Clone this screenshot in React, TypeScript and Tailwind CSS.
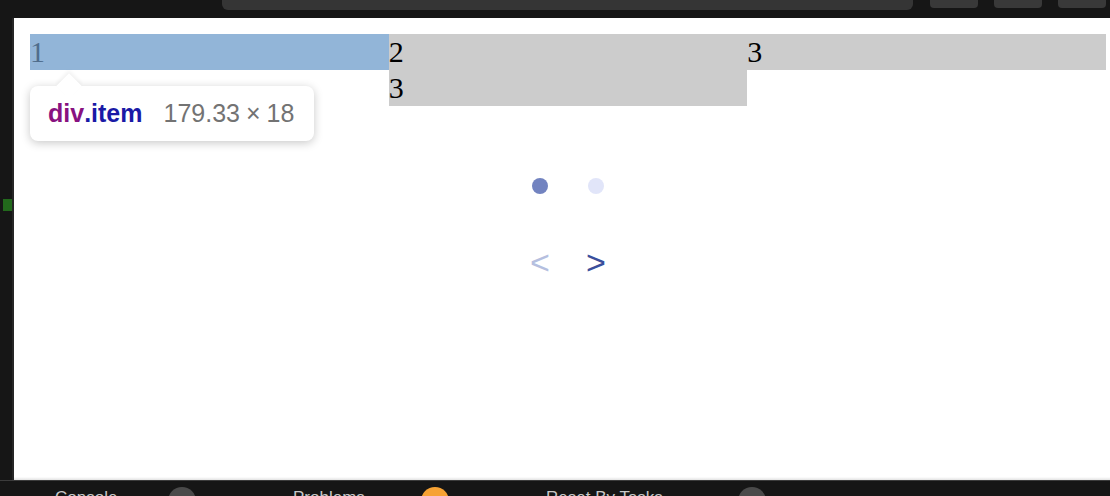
import React from "react";

const serif = { fontFamily: '"Liberation Serif", "Times New Roman", serif' };
const sans = { fontFamily: '"Liberation Sans", Arial, sans-serif' };

function TopBar() {
  return (
    <div className="flex h-[18px] shrink-0 items-start bg-[#161616]">
      <div className="ml-[222px] h-[10px] w-[691px] rounded-b-[6px] bg-[#353535]" />
      <div className="ml-[17px] h-[8px] w-[48px] rounded-b-[4px] bg-[#393939]" />
      <div className="ml-[16px] h-[8px] w-[48px] rounded-b-[4px] bg-[#393939]" />
      <div className="ml-[16px] h-[8px] w-[48px] rounded-b-[4px] bg-[#393939]" />
    </div>
  );
}

function Tooltip() {
  return (
    <div
      className="absolute left-[16px] top-[68px] flex h-[55px] w-[284px] items-center rounded-[8px] bg-white pl-[18px] shadow-[0_2px_10px_rgba(0,0,0,0.22)]"
      style={sans}
    >
      <div className="absolute left-[30px] top-[-9px] h-[18px] w-[18px] rotate-45 bg-white shadow-[-2px_-2px_4px_rgba(0,0,0,0.06)]" />
      <div className="relative flex items-center bg-white">
        <span className="text-[25px] font-bold text-[#881280]">div</span>
        <span className="text-[25px] font-bold text-[#1a1aa6]">.item</span>
        <span className="ml-[21px] text-[25px] text-[#737373]">
          179.33<span className="mx-[6px]">×</span>18
        </span>
      </div>
    </div>
  );
}

function Carousel() {
  const items = [
    { id: 1, text: "1", active: true },
    { id: 2, text: "2" },
    { id: 3, text: "3" },
  ];

  return (
    <div className="relative flex-1 bg-white pl-[16px] pt-[16px]">
      <div className="grid w-[1076px] grid-cols-3 text-[30px] leading-[36px]" style={serif}>
        {items.map((item) =>
          item.active ? (
            <div key={item.id} className="bg-[#92b5d8] text-[#4f6d8c]">
              {item.text}
            </div>
          ) : (
            <div key={item.id} className="bg-[#cccccc] text-black">
              {item.text}
            </div>
          )
        )}
        <div className="col-start-2 bg-[#cccccc] text-black">3</div>
      </div>

      {/* pagination */}
      <div className="mt-[72px] flex w-[1076px] justify-center gap-[40px]">
        <span className="h-[16px] w-[16px] rounded-full bg-[#7283c0]" />
        <span className="h-[16px] w-[16px] rounded-full bg-[#e1e5f9]" />
      </div>

      {/* arrows */}
      <div
        className="mt-[50px] flex w-[1076px] justify-center gap-[40px] text-[34px] leading-[36px]"
        style={sans}
      >
        <button className="flex w-[16px] justify-center text-[#b5bfdf]">&lt;</button>
        <button className="flex w-[16px] justify-center text-[#3b4f9c]">&gt;</button>
      </div>

      <Tooltip />
      <div className="absolute bottom-0 left-0 right-0 h-[3px] bg-gradient-to-b from-white to-[#e2e2e2]" />
    </div>
  );
}

function BottomBar() {
  const tabs = [
    { label: "Console", badge: "bg-[#4a4a4a]", w: "w-[113px]" },
    { label: "Problems", badge: "bg-[#f6a234]", w: "w-[128px]" },
    { label: "Reset By Tasks", badge: "bg-[#4a4a4a]", w: "w-[192px]" },
  ];
  return (
    <div className="h-[16px] shrink-0 overflow-hidden border-t border-[#3c3c3c] bg-[#161616]">
      <div className="flex items-start pl-[55px] pt-[8px]" style={sans}>
        {tabs.map((t) => (
          <div key={t.label} className="flex items-start">
            <span className={`${t.w} text-[17px] leading-[17px] text-[#c8c8c8]`}>{t.label}</span>
            <span className={`mt-[-2px] h-[28px] w-[28px] rounded-full ${t.badge}`} />
            <span className="w-[97px]" />
          </div>
        ))}
      </div>
    </div>
  );
}

export default function App() {
  return (
    <div className="flex h-[496px] w-[1110px] flex-col overflow-hidden bg-[#161616]">
      <TopBar />
      <div className="flex flex-1">
        <div className="relative w-[14px] shrink-0 border-r-2 border-[#262626] bg-[#161616]">
          <div className="absolute left-[3px] top-[181px] h-[12px] w-[9px] bg-[#22691c]" />
        </div>
        <Carousel />
      </div>
      <BottomBar />
    </div>
  );
}
